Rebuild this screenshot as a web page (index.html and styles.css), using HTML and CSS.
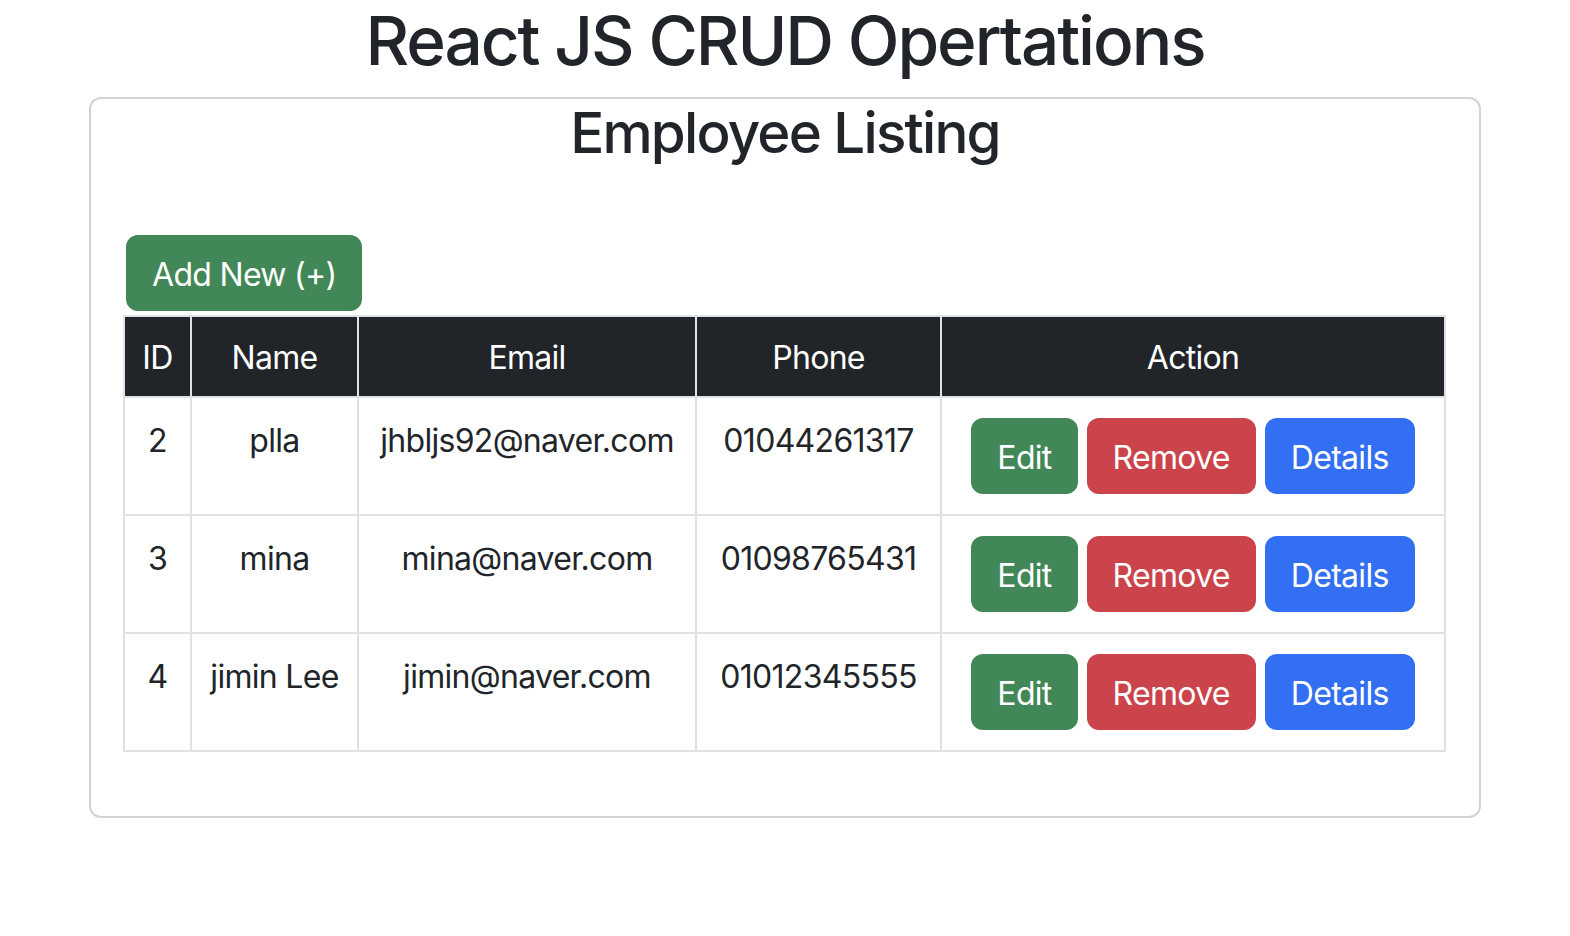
FILE: index.html
```html
<!DOCTYPE html>
<html lang="en">
<head>
<meta charset="utf-8">
<title>React JS CRUD Opertations</title>
<link rel="stylesheet" href="styles.css">
</head>
<body>
<div class="app">
  <h1 class="page-title">React JS CRUD Opertations</h1>
  <div class="container">
    <div class="card">
      <div class="card-title">
        <h2>Employee Listing</h2>
      </div>
      <div class="card-body">
        <div class="add-row">
          <a class="btn btn-success">Add New (+)</a>
        </div>
        <table class="table">
          <colgroup>
            <col class="c-id">
            <col class="c-name">
            <col class="c-email">
            <col class="c-phone">
            <col class="c-action">
          </colgroup>
          <thead>
            <tr>
              <td>ID</td>
              <td>Name</td>
              <td>Email</td>
              <td>Phone</td>
              <td>Action</td>
            </tr>
          </thead>
          <tbody>
            <tr>
              <td>2</td>
              <td>plla</td>
              <td>jhbljs92@naver.com</td>
              <td>01044261317</td>
              <td class="actions"><div class="btn-group"><a class="btn btn-success">Edit</a><a class="btn btn-danger">Remove</a><a class="btn btn-primary">Details</a></div></td>
            </tr>
            <tr>
              <td>3</td>
              <td>mina</td>
              <td>mina@naver.com</td>
              <td>01098765431</td>
              <td class="actions"><div class="btn-group"><a class="btn btn-success">Edit</a><a class="btn btn-danger">Remove</a><a class="btn btn-primary">Details</a></div></td>
            </tr>
            <tr>
              <td>4</td>
              <td>jimin Lee</td>
              <td>jimin@naver.com</td>
              <td>01012345555</td>
              <td class="actions"><div class="btn-group"><a class="btn btn-success">Edit</a><a class="btn btn-danger">Remove</a><a class="btn btn-primary">Details</a></div></td>
            </tr>
          </tbody>
        </table>
      </div>
    </div>
  </div>
</div>
</body>
</html>
```

FILE: styles.css
```css
* { box-sizing: border-box; }

html, body {
  margin: 0;
  padding: 0;
  background: #ffffff;
}

body {
  font-family: Inter, "Noto Sans", "Liberation Sans", sans-serif;
  font-size: 32px;
  line-height: 1.5;
  color: #212529;
  letter-spacing: -0.7px;
}

.page-title {
  margin: 0 0 16px;
  font-size: 67.5px;
  font-weight: 500;
  line-height: 81px;
  text-align: center;
  letter-spacing: -2.1px;
}

.container {
  width: 1392px;
  margin-left: 89px;
}

.card {
  border: 2px solid #d3d3d3;
  border-radius: 12px;
  background: #fff;
}

.card-title h2 {
  margin: 0 0 16px;
  font-size: 56.5px;
  font-weight: 500;
  line-height: 68px;
  text-align: center;
  letter-spacing: -1.8px;
}

.card-body {
  padding: 32px;
}

.add-row {
  margin-top: 20px;
  padding-left: 3px;
}

.btn {
  display: inline-block;
  padding: 14px 24px 10px;
  border: 2px solid transparent;
  border-radius: 12px;
  font-size: 32px;
  line-height: 48px;
  color: #fff;
  text-align: center;
  white-space: nowrap;
  cursor: pointer;
}

.btn-success { background: #428758; border-color: #428758; }
.btn-danger  { background: #cb444b; border-color: #cb444b; }
.btn-primary { background: #326ff3; border-color: #326ff3; }

.table {
  width: 1321px;
  margin-top: 4px;
  margin-bottom: 32px;
  border-collapse: collapse;
  table-layout: fixed;
}

.c-id { width: 67px; }
.c-name { width: 167px; }
.c-email { width: 338px; }
.c-phone { width: 245px; }
.c-action { width: 504px; }

.table td {
  border: 2px solid #dee2e6;
  padding: 19px 8px 13px;
  text-align: center;
  vertical-align: top;
  white-space: nowrap;
}

.table thead td {
  background: #212529;
  color: #fff;
  padding: 17px 8px 14px;
}

.table td.actions {
  padding: 20px 8px;
}

.btn-group {
  display: flex;
  justify-content: center;
  gap: 9px;
}
```
